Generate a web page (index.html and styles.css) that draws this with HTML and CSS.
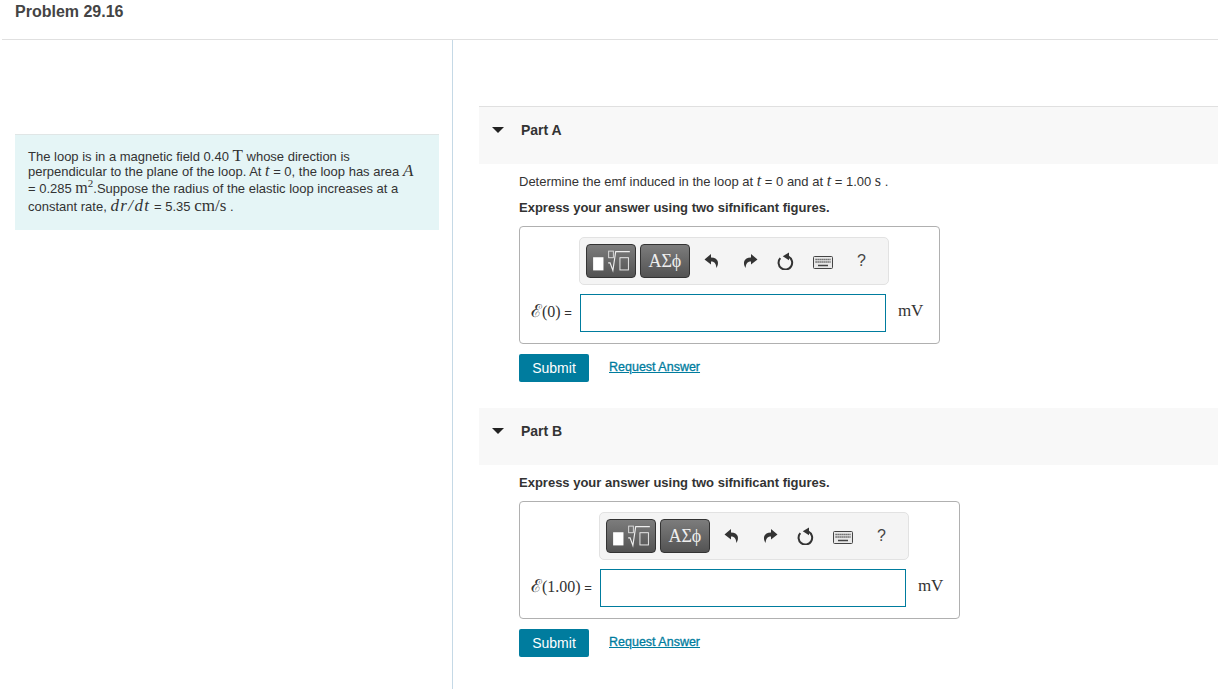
FILE: index.html
```html
<!DOCTYPE html>
<html lang="en">
<head>
  <meta charset="UTF-8">
  <title>Problem 29.16</title>
  <link rel="stylesheet" href="styles.css">
</head>
<body>
  <svg class="sprite" xmlns="http://www.w3.org/2000/svg">
    <symbol id="i-templates" viewBox="0 0 50 34">
      <rect x="6" y="13" width="11" height="14" fill="#fff"/>
      <rect x="22.500" y="6.500" width="5" height="7" fill="none" stroke="#ddd"/>
      <path d="M22 19h2l3 8 3-20h15" fill="none" stroke="#eee" stroke-width="1.200"/>
      <rect x="34.500" y="13.500" width="9" height="13" fill="none" stroke="#eee"/>
    </symbol>
    <symbol id="i-undo" viewBox="0 0 16 16">
      <path d="M7 1 0.500 6.500 7 11.500V8.400C10 8.400 12 9.600 12.400 15 15.400 10.400 14.600 4.600 7 4.500Z" fill="#333"/>
    </symbol>
    <symbol id="i-redo" viewBox="0 0 16 16">
      <path d="M9 1 15.500 6.500 9 11.500V8.400C6 8.400 4 9.600 3.600 15 0.600 10.400 1.400 4.600 9 4.500Z" fill="#333"/>
    </symbol>
    <symbol id="i-reset" viewBox="0 0 18 18">
      <path d="M12.500 4.700A6.800 6.800 0 1 1 4.300 6.200" fill="none" stroke="#333" stroke-width="2"/>
      <path d="M13 0.500V8.200L6.800 4.200Z" fill="#333"/>
    </symbol>
    <symbol id="i-keyboard" viewBox="0 0 20 13">
      <rect x="0.500" y="0.500" width="19" height="12" rx="1" fill="#e8e8e8" stroke="#444"/>
      <path d="M2.500 3.500h15M2.500 6h15" stroke="#444" stroke-width="1.300" stroke-dasharray="1.200 .8"/>
      <path d="M5 9.500h10" stroke="#444" stroke-width="1.500"/>
    </symbol>
  </svg>

  <header class="page-header">Problem 29.16</header>

  <div class="layout">
    <aside class="intro-col">
      <div class="intro">
        The loop is in a magnetic field 0.40 <span class="math upright big">T</span> whose direction is
        perpendicular to the plane of the loop. At <span class="math">t</span> = 0, the loop has area <span class="math big">A</span>
        = 0.285 <span class="math upright tall">m<sup>2</sup></span>.Suppose the radius of the elastic loop increases at a
        constant rate, <span class="math big tall rate">dr/dt</span> = 5.35 <span class="math upright big">cm/s</span> .
      </div>
    </aside>

    <main class="parts-col">
      <section class="part">
        <div class="part-head"><span class="caret"></span>Part A</div>
        <div class="part-body">
          <p class="question">Determine the emf induced in the loop at <span class="math">t</span> = 0 and at <span class="math">t</span> = 1.00 <span class="math upright">s</span> .</p>
          <p class="instruction">Express your answer using two sifnificant figures.</p>
          <div class="answer">
            <div class="toolbar">
              <button class="tool-btn"><svg class="templates"><use href="#i-templates"/></svg></button>
              <button class="tool-btn greek">ΑΣϕ</button>
              <svg class="tool tool-arrow"><use href="#i-undo"/></svg>
              <svg class="tool tool-arrow"><use href="#i-redo"/></svg>
              <svg class="tool tool-reset"><use href="#i-reset"/></svg>
              <svg class="tool tool-keys"><use href="#i-keyboard"/></svg>
              <span class="tool-help">?</span>
            </div>
            <label class="answer-label"><span class="math upright script">ℰ</span><span class="math upright">(0)</span> =</label>
            <input class="answer-input" type="text">
            <span class="math upright unit">mV</span>
          </div>
          <div class="actions">
            <button class="submit">Submit</button>
            <a class="request" href="#">Request Answer</a>
          </div>
        </div>
      </section>

      <section class="part">
        <div class="part-head part-head-b"><span class="caret"></span>Part B</div>
        <div class="part-body">
          <p class="instruction">Express your answer using two sifnificant figures.</p>
          <div class="answer">
            <div class="toolbar">
              <button class="tool-btn"><svg class="templates"><use href="#i-templates"/></svg></button>
              <button class="tool-btn greek">ΑΣϕ</button>
              <svg class="tool tool-arrow"><use href="#i-undo"/></svg>
              <svg class="tool tool-arrow"><use href="#i-redo"/></svg>
              <svg class="tool tool-reset"><use href="#i-reset"/></svg>
              <svg class="tool tool-keys"><use href="#i-keyboard"/></svg>
              <span class="tool-help">?</span>
            </div>
            <label class="answer-label"><span class="math upright script">ℰ</span><span class="math upright">(1.00)</span> =</label>
            <input class="answer-input" type="text">
            <span class="math upright unit">mV</span>
          </div>
          <div class="actions">
            <button class="submit">Submit</button>
            <a class="request" href="#">Request Answer</a>
          </div>
        </div>
      </section>
    </main>
  </div>
</body>
</html>
```

FILE: styles.css
```css
* {
  box-sizing: border-box;
}

body {
  margin: 0;
  height: 689px;
  overflow: hidden;
  font-family: "Liberation Sans", Arial, sans-serif;
  font-size: 13px;
  color: #333;
  background: #fff;
}

.sprite {
  display: none;
}

.page-header {
  height: 40px;
  margin-left: 2px;
  padding: 3px 0 0 13px;
  border-bottom: 1px solid #e0e0e0;
  font-size: 16px;
  line-height: 18px;
  font-weight: bold;
  color: #444;
}

.layout {
  display: flex;
  height: 649px;
}

.intro-col {
  width: 453px;
  padding: 94px 13px 0 15px;
  border-right: 1px solid #c5d9e6;
}

.intro {
  height: 96px;
  padding: 14px 16px 0 13px;
  border-top: 1px solid #e0e6e6;
  background: #e5f5f6;
  line-height: 15px;
}

.math {
  font-family: "Liberation Serif", "Times New Roman", serif;
  font-style: italic;
  font-size: 16px;
  line-height: 0;
}

.math.upright {
  font-style: normal;
}

.math.big {
  font-size: 17px;
}

.math.tall {
  display: inline-block;
  line-height: 18px;
}

.math.rate {
  letter-spacing: 1.4px;
}

.math sup {
  font-size: 11px;
  line-height: 0;
}

.parts-col {
  flex: 1;
  padding: 66px 0 0 26px;
}

.part-head {
  display: flex;
  height: 58px;
  padding: 15px 0 0 13px;
  border-top: 1px solid #e0e0e0;
  background: #f8f8f8;
  font-size: 14px;
  line-height: 16px;
  font-weight: bold;
  color: #333;
}

.part-head-b {
  height: 57px;
  border-top: 0;
  padding-top: 15px;
}

.caret {
  width: 0;
  height: 0;
  margin: 5px 17px 0 0;
  border-top: 6px solid #222;
  border-left: 6px solid transparent;
  border-right: 6px solid transparent;
}

.part-body {
  padding: 0 0 26px 40px;
}

.question {
  margin: 10px 0 0;
  line-height: 16px;
}

.instruction {
  margin: 9px 0 0;
  font-weight: bold;
  line-height: 18px;
}

.answer {
  display: inline-grid;
  grid-template-columns: auto 306px auto;
  column-gap: 8px;
  align-items: center;
  margin-top: 9px;
  padding: 10px 16px 11px 11px;
  border: 1px solid #b0b0b0;
  border-radius: 4px;
  vertical-align: top;
}

.toolbar {
  grid-column: 2 / 4;
  display: flex;
  align-items: center;
  justify-self: start;
  width: 310px;
  height: 48px;
  margin: 0 0 9px -1px;
  padding-left: 6px;
  border: 1px solid #e2e2e2;
  border-radius: 5px;
  background: #f4f4f4;
}

.tool-btn {
  display: block;
  width: 50px;
  height: 34px;
  padding: 0;
  margin-right: 4px;
  border: 1px solid #333;
  border-radius: 4px;
  background: linear-gradient(#7c7c7c, #535353);
  color: #eee;
}

.templates {
  display: block;
  width: 48px;
  height: 32px;
}

.greek {
  margin-right: 0;
  font-family: "Liberation Serif", serif;
  font-size: 18px;
}

.tool {
  flex: none;
}

.tool-arrow {
  width: 16px;
  height: 16px;
  margin-left: 14px;
}

.tool-arrow + .tool-arrow {
  margin-left: 22px;
}

.tool-reset {
  width: 18px;
  height: 18px;
  margin-left: 18px;
}

.tool-keys {
  width: 20px;
  height: 13px;
  margin: 2px 0 0 19px;
}

.tool-help {
  margin-left: 24px;
  font-size: 16px;
  color: #444;
}

.answer-label {
  margin-bottom: 2px;
  white-space: nowrap;
}

.script {
  font-size: 18px;
}

.answer-input {
  width: 306px;
  height: 38px;
  border: 1px solid #007c9e;
  border-radius: 0;
  background: #fff;
}

.unit {
  margin: 0 0 4px 4px;
  font-size: 17px;
}

.actions {
  display: flex;
  align-items: center;
  gap: 20px;
  margin-top: 10px;
}

.submit {
  width: 70px;
  height: 28px;
  padding: 0;
  border: 0;
  border-radius: 2px;
  background: #007c9e;
  color: #fff;
  font-family: inherit;
  font-size: 14px;
}

.request {
  margin-top: -3px;
  color: #007c9e;
  font-size: 12.5px;
  -webkit-text-stroke: 0.3px #007c9e;
}
```
